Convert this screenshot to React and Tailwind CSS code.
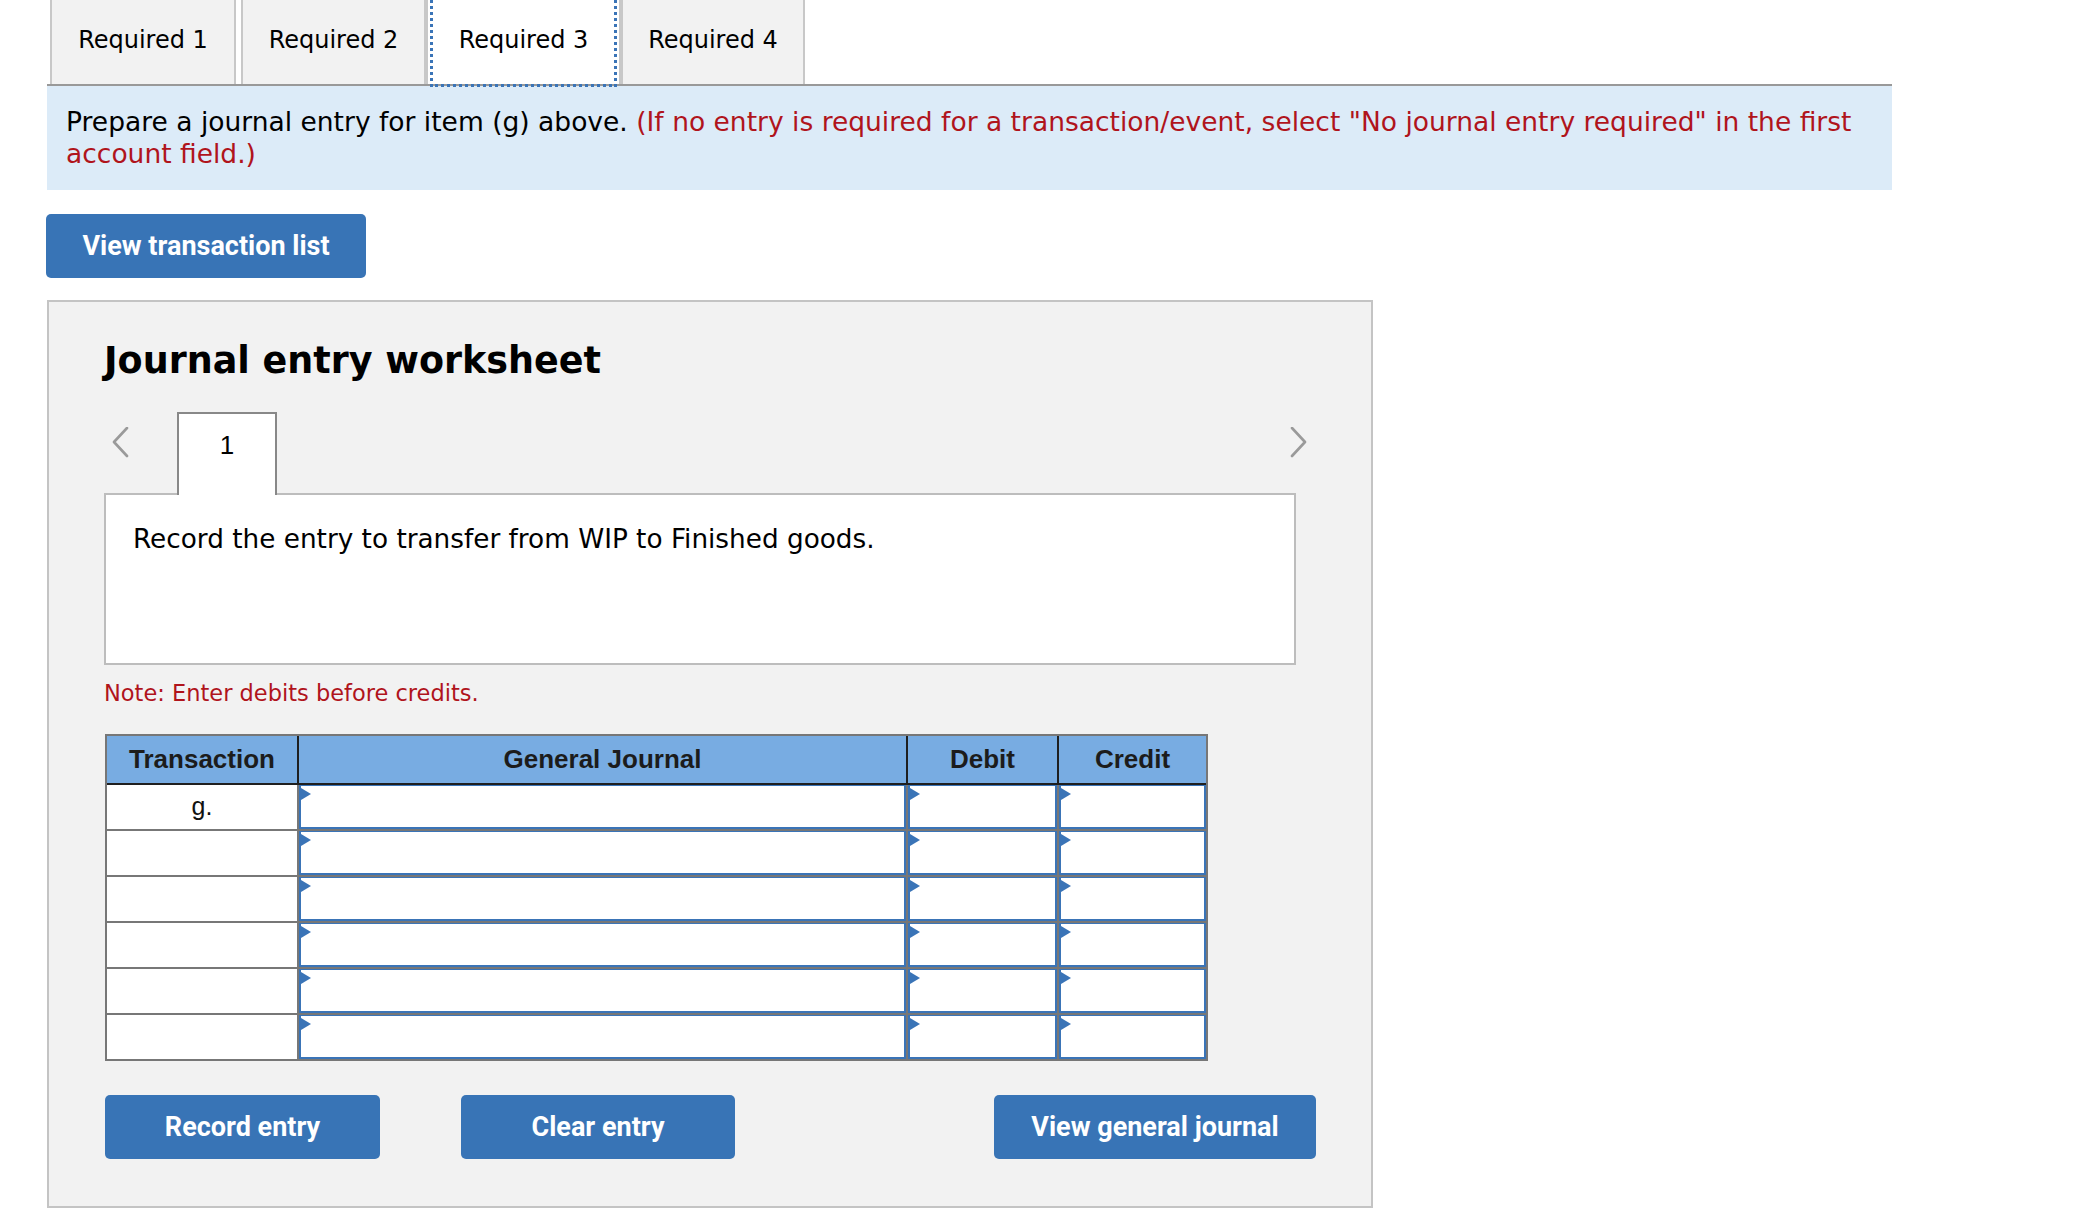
import React from 'react';

const FONT = { fontFamily: '"DejaVu Sans", Verdana, sans-serif' };
const ARIAL = { fontFamily: '"Liberation Sans", Arial, sans-serif' };

function Chevron({ dir }) {
    const pts = dir === 'left' ? '15,1 2,15 15,29' : '2,1 15,15 2,29';
    return (
        <svg width="17" height="31" viewBox="0 0 17 31" className="shrink-0 mt-[15px]">
            <polyline points={pts} fill="none" stroke="#9a9a9a" strokeWidth="2.6" strokeLinecap="round" strokeLinejoin="round" />
        </svg>
    );
}

function Flag() {
    return (
        <svg width="10" height="12" viewBox="0 0 10 12" className="absolute left-0 top-[2px]">
            <polygon points="0,0 10,6 0,12" fill="#3a74b7" />
        </svg>
    );
}

function InputCell({ className }) {
    return (
        <div className={className}>
            <div className="relative h-full w-full bg-white border-x-2 border-b-2 border-t border-[#3a74b7]">
                <Flag />
            </div>
        </div>
    );
}

function Row({ label, last }) {
    return (
        <div className={`flex ${last ? 'h-[44px]' : 'h-[46px] border-b-2 border-[#777]'}`}>
            <div className="w-[192px] h-full bg-white border-r-2 border-[#777] flex items-center justify-center text-[25px] text-[#111]" style={ARIAL}>
                {label}
            </div>
            <InputCell className="w-[609px] h-full border-r-2 border-[#777]" />
            <InputCell className="w-[151px] h-full border-r-2 border-[#777]" />
            <InputCell className="w-[147px] h-full" />
        </div>
    );
}

export default function App() {
    const tabs = [
        { label: 'Required 1', w: 'w-[186px]' },
        { label: 'Required 2', w: 'w-[185px] ml-[5px]' },
        { label: 'Required 3', w: 'w-[195px]', active: true },
        { label: 'Required 4', w: 'w-[184px]' },
    ];
    const btn = 'h-[64px] rounded-[5px] bg-[#3874b6] text-white font-bold text-[27px] flex items-center justify-center';
    const btnFont = { fontFamily: 'Roboto, "Liberation Sans", sans-serif' };

    return (
        <div className="w-[2078px] h-[1218px] overflow-hidden bg-white text-black" style={FONT}>
            {/* top tabs */}
            <div className="flex ml-[50px] h-[84px]">
                {tabs.map((t) => (
                    <div key={t.label}
                         className={`${t.w} relative h-full flex items-center justify-center border-x-2 border-[#c8c8c8] text-[24px] ${t.active ? 'bg-white' : 'bg-[#f2f2f2]'}`}>
                        <span className="-mt-[5px]">{t.label}</span>
                        {t.active && (
                            <span className="absolute left-[2px] right-[2px] top-0 -bottom-[3px] border-x-[3px] border-b-[3px] border-dotted border-[#3a74b7] z-10" />
                        )}
                    </div>
                ))}
            </div>

            <div className="ml-[47px] w-[1845px] border-t-2 border-[#999] bg-[#dcebf8] pt-[20px] pb-[20px] pl-[19px] text-[26.5px] leading-[32px]">
                Prepare a journal entry for item (g) above.{' '}
                <span className="text-[#b0141c]">
                    (If no entry is required for a transaction/event, select "No journal entry required" in the first
                    <br />
                    account field.)
                </span>
            </div>

            <button className={`${btn} mt-[24px] ml-[46px] w-[320px] h-[63px]`} style={btnFont}>
                View transaction list
            </button>

            {/* worksheet panel */}
            <div className="mt-[22px] ml-[47px] w-[1326px] h-[908px] border-2 border-[#c4c4c4] bg-[#f2f2f2] pl-[55px] pt-[39px]">
                <h2 className="font-bold text-[36.5px] leading-[40px] text-black">Journal entry worksheet</h2>

                <div className="flex items-start w-[1206px] h-[81px] mt-[31px] pr-[3px]">
                    <div className="ml-[8px]"><Chevron dir="left" /></div>
                    <div className="ml-[48px] w-[100px] h-[83px] bg-white border-2 border-b-0 border-[#888] relative z-10 flex justify-center pt-[16px]">
                        <span className="text-[26px] leading-[30px]" style={ARIAL}>1</span>
                    </div>
                    <div className="flex-1" />
                    <Chevron dir="right" />
                </div>

                <div className="w-[1192px] h-[172px] border-2 border-[#bdbdbd] bg-white px-[27px] pt-[28px] text-[26.3px] leading-[32px]">
                    Record the entry to transfer from WIP to Finished goods.
                </div>

                <p className="mt-[15px] text-[22.5px] leading-[26px] text-[#b0141c]">Note: Enter debits before credits.</p>

                <div className="mt-[28px] w-[1103px] border-2 border-[#777] ml-[1px]">
                    <div className="flex h-[49px] bg-[#78ace2] border-b-2 border-[#1f1f1f] font-bold text-[26px] text-[#1c1c1c]" style={ARIAL}>
                        <div className="w-[192px] border-r-2 border-[#1f1f1f] flex items-center justify-center">Transaction</div>
                        <div className="w-[609px] border-r-2 border-[#1f1f1f] flex items-center justify-center">General Journal</div>
                        <div className="w-[151px] border-r-2 border-[#1f1f1f] flex items-center justify-center">Debit</div>
                        <div className="w-[147px] flex items-center justify-center">Credit</div>
                    </div>
                    {['g.', '', '', '', '', ''].map((l, i) => (
                        <Row key={i} label={l} last={i === 5} />
                    ))}
                </div>

                <div className="flex mt-[34px] ml-[1px]">
                    <button className={`${btn} w-[275px]`} style={btnFont}>Record entry</button>
                    <button className={`${btn} w-[274px] ml-[81px]`} style={btnFont}>Clear entry</button>
                    <button className={`${btn} w-[322px] ml-[259px]`} style={btnFont}>View general journal</button>
                </div>
            </div>
        </div>
    );
}
